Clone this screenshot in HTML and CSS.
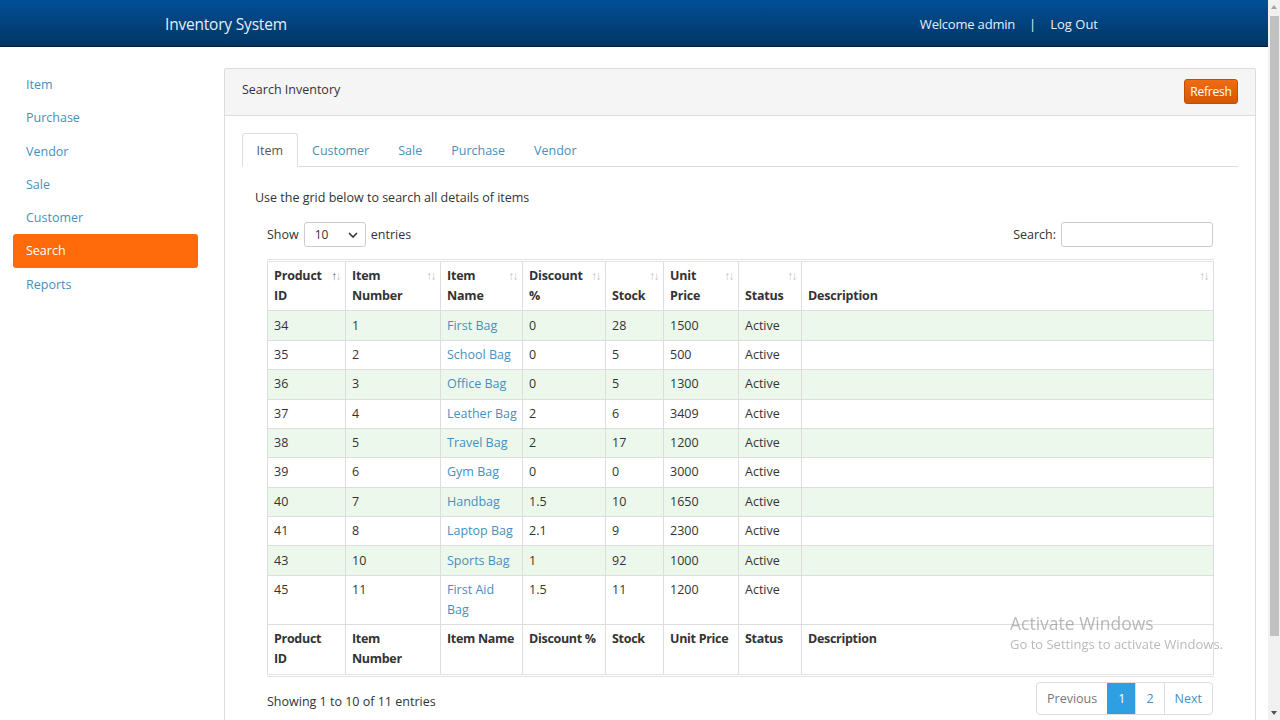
FILE: index.html
```html
<!DOCTYPE html>
<html lang="en">
<head>
<meta charset="utf-8">
<title>Inventory System</title>
<link rel="stylesheet" href="styles.css">
</head>
<body>
<div class="frame">
  <div class="page">
    <header class="topbar">
      <div class="brand">Inventory System</div>
      <div class="user">
        <span>Welcome admin</span>
        <span class="sep">|</span>
        <a class="logout" href="#">Log Out</a>
      </div>
    </header>
    <div class="layout">
      <nav class="sidebar">
        <a class="nav-link" href="#">Item</a>
        <a class="nav-link" href="#">Purchase</a>
        <a class="nav-link" href="#">Vendor</a>
        <a class="nav-link" href="#">Sale</a>
        <a class="nav-link" href="#">Customer</a>
        <a class="nav-link active" href="#">Search</a>
        <a class="nav-link" href="#">Reports</a>
      </nav>
      <main class="main">
        <section class="panel">
          <div class="panel-head">
            <span class="panel-title">Search Inventory</span>
            <button class="btn-refresh" type="button">Refresh</button>
          </div>
          <div class="panel-body">
            <ul class="tabs">
              <li class="tab active">Item</li>
              <li class="tab">Customer</li>
              <li class="tab">Sale</li>
              <li class="tab">Purchase</li>
              <li class="tab">Vendor</li>
            </ul>
            <div class="tab-content">
              <p class="intro">Use the grid below to search all details of items</p>
              <div class="dt">
                <div class="dt-controls">
                  <label class="dt-length">Show
                    <span class="select">10<svg class="chev" viewBox="0 0 10 6" width="10" height="6"><path d="M1 1 L5 5 L9 1" fill="none" stroke="#333" stroke-width="1.6"/></svg></span>
                    entries</label>
                  <label class="dt-search">Search: <span class="search-input"></span></label>
                </div>
                <table class="grid">
                  <colgroup>
                    <col style="width:78px"><col style="width:95px"><col style="width:82px"><col style="width:83px">
                    <col style="width:58px"><col style="width:75px"><col style="width:63px"><col style="width:412px">
                  </colgroup>
                  <thead>
                    <tr>
                      <th class="top"><span class="sort asc"><b>↑</b>↓</span>Product ID</th>
                      <th class="top"><span class="sort">↑↓</span>Item Number</th>
                      <th class="top"><span class="sort">↑↓</span>Item Name</th>
                      <th class="top"><span class="sort">↑↓</span>Discount %</th>
                      <th><span class="sort">↑↓</span>Stock</th>
                      <th class="top"><span class="sort">↑↓</span>Unit Price</th>
                      <th><span class="sort">↑↓</span>Status</th>
                      <th><span class="sort">↑↓</span>Description</th>
                    </tr>
                  </thead>
                  <tbody>
                    <tr class="odd"><td>34</td><td>1</td><td><a href="#">First Bag</a></td><td>0</td><td>28</td><td>1500</td><td>Active</td><td></td></tr>
                    <tr><td>35</td><td>2</td><td><a href="#">School Bag</a></td><td>0</td><td>5</td><td>500</td><td>Active</td><td></td></tr>
                    <tr class="odd"><td>36</td><td>3</td><td><a href="#">Office Bag</a></td><td>0</td><td>5</td><td>1300</td><td>Active</td><td></td></tr>
                    <tr><td>37</td><td>4</td><td><a href="#">Leather Bag</a></td><td>2</td><td>6</td><td>3409</td><td>Active</td><td></td></tr>
                    <tr class="odd"><td>38</td><td>5</td><td><a href="#">Travel Bag</a></td><td>2</td><td>17</td><td>1200</td><td>Active</td><td></td></tr>
                    <tr><td>39</td><td>6</td><td><a href="#">Gym Bag</a></td><td>0</td><td>0</td><td>3000</td><td>Active</td><td></td></tr>
                    <tr class="odd"><td>40</td><td>7</td><td><a href="#">Handbag</a></td><td>1.5</td><td>10</td><td>1650</td><td>Active</td><td></td></tr>
                    <tr><td>41</td><td>8</td><td><a href="#">Laptop Bag</a></td><td>2.1</td><td>9</td><td>2300</td><td>Active</td><td></td></tr>
                    <tr class="odd"><td>43</td><td>10</td><td><a href="#">Sports Bag</a></td><td>1</td><td>92</td><td>1000</td><td>Active</td><td></td></tr>
                    <tr><td>45</td><td>11</td><td><a href="#">First Aid<br>Bag</a></td><td>1.5</td><td>11</td><td>1200</td><td>Active</td><td></td></tr>
                  </tbody>
                  <tfoot>
                    <tr><th>Product<br>ID</th><th>Item<br>Number</th><th>Item Name</th><th>Discount %</th><th>Stock</th><th>Unit Price</th><th>Status</th><th>Description</th></tr>
                  </tfoot>
                </table>
                <div class="dt-bottom">
                  <span class="dt-info">Showing 1 to 10 of 11 entries</span>
                  <ul class="pager">
                    <li class="pg disabled">Previous</li>
                    <li class="pg current">1</li>
                    <li class="pg">2</li>
                    <li class="pg">Next</li>
                  </ul>
                </div>
              </div>
            </div>
          </div>
        </section>
      </main>
    </div>
  </div>
  <div class="scrollbar">
    <span class="arrow up"></span>
    <span class="thumb"></span>
    <span class="arrow down"></span>
  </div>
</div>
<div class="watermark">
  <div class="wm-title">Activate Windows</div>
  <div class="wm-sub">Go to Settings to activate Windows.</div>
</div>
</body>
</html>
```
FILE: styles.css
```css
* { box-sizing: border-box; }
html, body { margin: 0; padding: 0; }
body {
  font-family: "Open Sans", "Noto Sans", sans-serif;
  font-size: 12.5px;
  color: #333;
  background: #fff;
  overflow: hidden;
  height: 720px;
}
a { color: #4690c0; text-decoration: none; }

.frame { display: flex; height: 720px; }
.page { flex: 1; min-width: 0; }

.topbar {
  height: 47px;
  background: linear-gradient(#024f97, #013563);
  border-bottom: 1px solid #0b1a33;
  display: flex;
  align-items: center;
  justify-content: space-between;
  padding: 1px 170px 0 165px;
  color: #e4eef8;
}
.brand { font-size: 15.5px; letter-spacing: -0.2px; }
.user { font-size: 13px; display: flex; align-items: center; }
.user span:first-child { letter-spacing: -0.2px; }
.user .sep { margin: 0 14px 0 14px; }
.logout { color: #e4eef8; }

.layout { display: flex; padding: 21px 12px 0 13px; gap: 26px; }
.sidebar { width: 185px; flex: none; display: flex; flex-direction: column; }
.nav-link {
  display: block;
  height: 33.3px;
  line-height: 34px;
  padding-left: 13px;
  color: #4690c0;
  font-size: 12.5px;
  border-radius: 3px;
}
.nav-link.active { background: #ff6a0a; color: #fff; }

.main { flex: 1; min-width: 0; }
.panel { border: 1px solid #ddd; border-radius: 2px; }
.panel-head {
  height: 47px;
  background: #f5f5f5;
  border-bottom: 1px solid #ddd;
  display: flex;
  align-items: flex-start;
  justify-content: space-between;
  padding: 10px 17px 0 17px;
}
.panel-title { font-size: 12.5px; color: #333; line-height: 21px; }
.btn-refresh {
  font-family: inherit;
  font-size: 12px;
  color: #fff;
  background: linear-gradient(#ee6d12, #d75606);
  border: 1px solid #c04f06;
  border-radius: 3px;
  height: 25px;
  width: 54px;
  padding: 0;
  letter-spacing: -0.2px;
}
.panel-body { padding: 17px 17px 40px 17px; }

.tabs {
  list-style: none;
  margin: 0;
  padding: 0;
  display: flex;
  border-bottom: 1px solid #ddd;
  height: 34px;
}
.tab {
  padding: 0 13.5px;
  line-height: 34px;
  color: #4690c0;
  border: 1px solid transparent;
  border-radius: 3px 3px 0 0;
}
.tab.active {
  color: #555;
  border-color: #ddd;
  border-bottom-color: #fff;
  background: #fff;
  height: 34px;
}

.tab-content { padding: 0 13px; }
.intro { margin: 22px 0 0 0; line-height: 18px; }
.dt { padding: 0 12px; }
.dt-controls {
  display: flex;
  justify-content: space-between;
  align-items: center;
  margin-top: 15px;
  height: 25px;
}
.dt-length, .dt-search { display: flex; align-items: center; gap: 5px; }
.select {
  width: 62px;
  height: 25px;
  border: 1px solid #ccc;
  border-radius: 3px;
  display: flex;
  align-items: center;
  justify-content: space-between;
  padding: 0 7px 0 10px;
  font-size: 12px;
}
.search-input {
  width: 152px;
  height: 25px;
  border: 1px solid #ccc;
  border-radius: 3px;
  display: block;
}

.grid {
  width: 946px;
  table-layout: fixed;
  border-collapse: collapse;
  margin-top: 12px;
  border: 1px solid #ddd;
  border-top: 3px double #e3e3e3;
  border-bottom: 3px double #e3e3e3;
}
.grid th, .grid td {
  border: 1px solid #ddd;
  padding: 4.2px 3px 4.2px 6px;
  line-height: 20px;
  text-align: left;
  vertical-align: top;
}
.grid thead th {
  vertical-align: bottom;
  border-bottom: 1px solid #ddd;
  position: relative;
  padding-right: 16px;
  font-weight: 700;
  letter-spacing: -0.2px;
}
.grid thead th.top { vertical-align: top; }
.grid tfoot th { font-weight: 700; letter-spacing: -0.3px; padding-right: 2px; }
.grid tr.odd td { background: #ecf8ec; }
.sort {
  position: absolute;
  top: 7px;
  right: 5px;
  font-size: 11.5px;
  line-height: 13px;
  color: #bdbdbd;
  font-weight: 400;
  letter-spacing: -1.5px;
}
.sort.asc b { color: #666; font-weight: 400; }

.dt-bottom {
  display: flex;
  justify-content: space-between;
  align-items: center;
  margin-top: 5px;
}
.dt-info { padding-top: 6px; }
.pager {
  list-style: none;
  margin: 0;
  padding: 0;
  display: flex;
  border: 1px solid #ddd;
  border-radius: 4px;
  overflow: hidden;
  height: 33px;
}
.pg {
  padding: 0 10px;
  line-height: 31px;
  color: #4690c0;
  border-left: 1px solid #ddd;
}
.pg:first-child { border-left: none; }
.pg.disabled { color: #777; }
.pg.current { background: #2e9fe2; color: #fff; border-color: #2e9fe2; }

.scrollbar {
  width: 12px;
  flex: none;
  background: #f1f1f1;
  display: flex;
  flex-direction: column;
  align-items: center;
}
.arrow { height: 14px; width: 12px; display: flex; align-items: center; justify-content: center; }
.arrow.up::before {
  content: ""; border-left: 3px solid transparent; border-right: 3px solid transparent; border-bottom: 4px solid #a3a3a3;
}
.arrow.down { margin-top: auto; }
.arrow.down::before {
  content: ""; border-left: 3px solid transparent; border-right: 3px solid transparent; border-top: 4px solid #505050;
}
.thumb { width: 9px; height: 620px; background: #c1c1c1; margin-top: 2px; }

.watermark {
  position: fixed;
  left: 1010px;
  top: 611px;
  color: rgba(128, 128, 128, 0.55);
  pointer-events: none;
}
.wm-title { font-size: 17.5px; line-height: 24px; }
.wm-sub { font-size: 13px; line-height: 18px; }
```
